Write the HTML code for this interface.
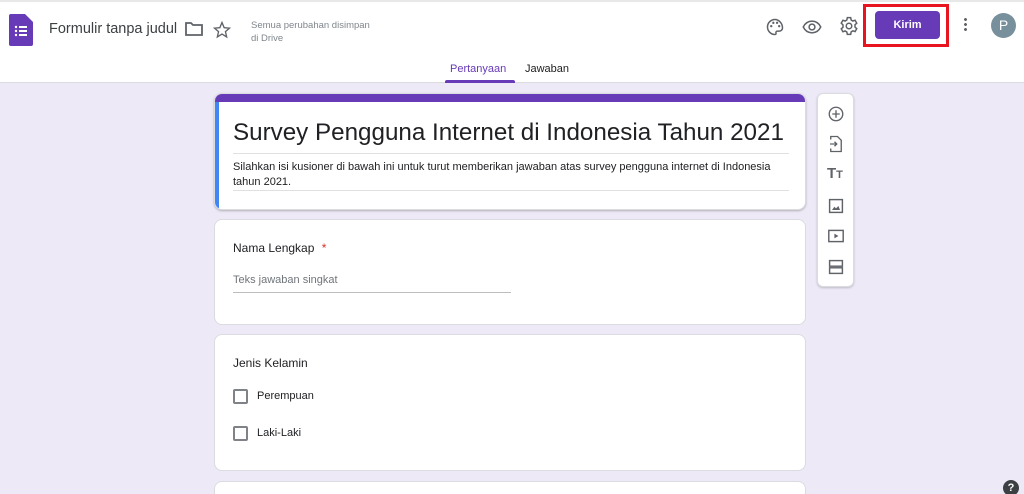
<!DOCTYPE html>
<html><head><meta charset="utf-8"><style>
*{box-sizing:border-box;margin:0;padding:0}
html,body{width:1024px;height:494px;overflow:hidden}
body{background:#ede9f6;font-family:"Liberation Sans",Arial,sans-serif;position:relative;color:#202124}
.hdr{position:absolute;left:0;top:0;width:1024px;height:83px;background:#fff;border-top:2px solid #e8e8e8;border-bottom:1px solid #dadce0}
.abs{position:absolute}
.card{position:absolute;left:214px;width:592px;background:#fff;border:1px solid #dadce0;border-radius:8px}
.ico{stroke:#5f6368;fill:none;stroke-width:1.8}
</style></head><body>
<div class="hdr">
 <svg class="abs" style="left:9px;top:12px" width="24" height="32" viewBox="0 0 24 32"><path d="M2 0h14l8 8v22a2 2 0 0 1-2 2H2a2 2 0 0 1-2-2V2a2 2 0 0 1 2-2z" fill="#673ab7"/><g fill="#fff"><circle cx="7" cy="13" r="1.2"/><circle cx="7" cy="17" r="1.2"/><circle cx="7" cy="21" r="1.2"/><rect x="10" y="12" width="8" height="2"/><rect x="10" y="16" width="8" height="2"/><rect x="10" y="20" width="8" height="2"/></g></svg>
 <div class="abs" style="left:49px;top:19px;font-size:14.5px;color:#3c4043">Formulir tanpa judul</div>
 <svg class="abs" style="left:185px;top:19px" width="18" height="16"><path d="M1 2h5l2 2h9v10H1z" class="ico"/></svg>
 <svg class="abs" style="left:213px;top:19px" width="18" height="18" viewBox="0 0 24 24"><path d="M12 2l2.9 6.9 7.1.6-5.4 4.7 1.6 7-6.2-3.8-6.2 3.8 1.6-7L2 9.5l7.1-.6z" class="ico"/></svg>
 <div class="abs" style="left:251px;top:17px;font-size:9.5px;color:#80868b;line-height:13px">Semua perubahan disimpan<br>di Drive</div>
 <svg class="abs" style="left:765px;top:15px" width="20" height="20" viewBox="0 0 24 24"><path d="M12 3a9 9 0 0 0 0 18c1 0 1.5-.8 1.2-1.6-.5-1.2.3-2.4 1.6-2.4H17a4 4 0 0 0 4-4c0-5-4-10-9-10z" class="ico"/><g fill="#5f6368"><circle cx="7.5" cy="11" r="1.4"/><circle cx="10" cy="7" r="1.4"/><circle cx="14.5" cy="7" r="1.4"/><circle cx="17" cy="11" r="1.4"/></g></svg>
 <svg class="abs" style="left:802px;top:15px" width="20" height="20" viewBox="0 0 24 24"><path d="M1.5 12C4 7 8 5 12 5s8 2 10.5 7C20 17 16 19 12 19s-8-2-10.5-7z" class="ico"/><circle cx="12" cy="12" r="3.5" class="ico"/></svg>
 <svg class="abs" style="left:839px;top:14px" width="20" height="20" viewBox="0 0 24 24"><circle cx="12" cy="12" r="3.3" class="ico"/><path d="M10 2h4l.6 2.8 2 1.2 2.7-.9 2 3.5-2.1 1.9v2.8l2.1 1.9-2 3.5-2.7-.9-2 1.2L14 22h-4l-.6-2.8-2-1.2-2.7.9-2-3.5 2.1-1.9v-2.8L2.7 8.6l2-3.5 2.7.9 2-1.2z" class="ico"/></svg>
 <div class="abs" style="left:863px;top:2px;width:86px;height:43px;border:3px solid #e8141f"></div>
 <div class="abs" style="left:875px;top:9px;width:65px;height:28px;background:#673ab7;border-radius:4px;color:#fff;font-size:11px;font-weight:bold;text-align:center;line-height:28px">Kirim</div>
 <div class="abs" style="left:964px;top:15px;width:3px;height:15px;background:radial-gradient(circle,#5f6368 1.3px,transparent 1.6px) 0 0/3px 5px"></div>
 <div class="abs" style="left:991px;top:11px;width:25px;height:25px;border-radius:50%;background:#78909c;color:#fff;font-size:14px;text-align:center;line-height:25px">P</div>
 <div class="abs" style="left:450px;top:61px;font-size:11px;color:#673ab7">Pertanyaan</div>
 <div class="abs" style="left:445px;top:78px;width:70px;height:3px;background:#673ab7;border-radius:2px 2px 0 0"></div>
 <div class="abs" style="left:525px;top:61px;font-size:11px;color:#202124">Jawaban</div>
</div>

<div class="card" style="top:93px;height:117px;overflow:hidden;box-shadow:0 1px 2px rgba(0,0,0,.25)">
 <div class="abs" style="left:0;top:0;width:592px;height:8px;background:#673ab7"></div>
 <div class="abs" style="left:0;top:8px;width:4px;height:110px;background:#4285f4"></div>
 <div class="abs" style="left:18px;top:25px;font-size:24.2px;color:#202124">Survey Pengguna Internet di Indonesia Tahun 2021</div>
 <div class="abs" style="left:18px;top:59px;width:556px;border-top:1px solid #e0e0e0"></div>
 <div class="abs" style="left:18px;top:66px;font-size:11px;line-height:15px;color:#202124;width:556px">Silahkan isi kusioner di bawah ini untuk turut memberikan jawaban atas survey pengguna internet di Indonesia tahun 2021.</div>
 <div class="abs" style="left:18px;top:96px;width:556px;border-top:1px solid #e0e0e0"></div>
</div>

<div class="card" style="top:219px;height:106px">
 <div class="abs" style="left:18px;top:21px;font-size:12px">Nama Lengkap <span style="color:#d93025;margin-left:4px">*</span></div>
 <div class="abs" style="left:18px;top:54px;font-size:11px;color:#70757a">Teks jawaban singkat</div>
 <div class="abs" style="left:18px;top:72px;width:278px;border-top:1px solid #bdbdbd"></div>
</div>

<div class="card" style="top:334px;height:137px">
 <div class="abs" style="left:18px;top:21px;font-size:12px">Jenis Kelamin</div>
 <div class="abs" style="left:18px;top:54px;width:15px;height:15px;border:2px solid #5f6368;border-radius:2px;opacity:.8"></div>
 <div class="abs" style="left:42px;top:55px;font-size:11px">Perempuan</div>
 <div class="abs" style="left:18px;top:91px;width:15px;height:15px;border:2px solid #5f6368;border-radius:2px;opacity:.8"></div>
 <div class="abs" style="left:42px;top:92px;font-size:11px">Laki-Laki</div>
</div>
<div class="card" style="top:481px;height:13px;border-bottom:none;border-radius:8px 8px 0 0"></div>

<div class="abs" style="left:817px;top:93px;width:37px;height:194px;background:#fff;border:1px solid #dadce0;border-radius:6px;box-shadow:0 1px 2px rgba(0,0,0,.2)">
 <svg class="abs" style="left:9px;top:11px" width="18" height="18" viewBox="0 0 24 24"><circle cx="12" cy="12" r="9" class="ico"/><path d="M12 7v10M7 12h10" class="ico"/></svg>
 <svg class="abs" style="left:10px;top:41px" width="16" height="18" viewBox="0 0 20 24"><path d="M3 6V2h9l5 5v15H3v-4M2 12h9M8 9l3 3-3 3" class="ico"/></svg>
 <div class="abs" style="left:9px;top:71px;font-size:15px;font-weight:bold;color:#5f6368">T<span style="font-size:11px">T</span></div>
 <svg class="abs" style="left:10px;top:104px" width="16" height="16" viewBox="0 0 20 20"><rect x="2" y="2" width="16" height="16" class="ico"/><path d="M5 15l3-4 2 2 3-3 2 5z" fill="#5f6368"/></svg>
 <svg class="abs" style="left:9px;top:134px" width="18" height="16" viewBox="0 0 22 20"><rect x="2" y="3" width="18" height="14" class="ico"/><path d="M9 7v6l5-3z" fill="#5f6368"/></svg>
 <svg class="abs" style="left:10px;top:165px" width="16" height="16" viewBox="0 0 20 20"><rect x="2" y="2" width="16" height="7" class="ico"/><rect x="2" y="11" width="16" height="7" class="ico"/></svg>
</div>
<div class="abs" style="left:1003px;top:480px;width:16px;height:16px;border-radius:50%;background:#3c4043;color:#fff;font-size:11px;font-weight:bold;text-align:center;line-height:16px">?</div>
</body></html>
